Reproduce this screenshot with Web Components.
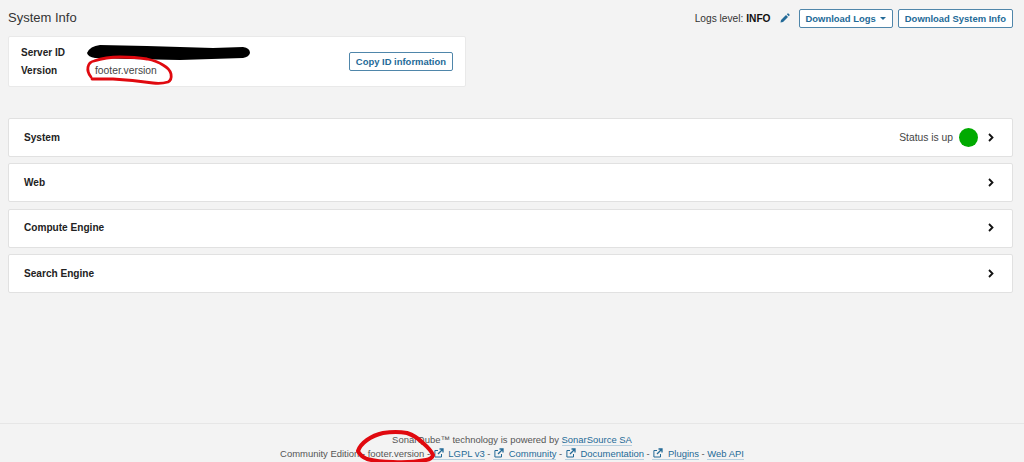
<!DOCTYPE html>
<html>
<head>
<meta charset="utf-8">
<title>System Info</title>
<style>
    html, body { margin: 0; height: 100%; }
    body {
        background: #f3f3f3;
        color: #333;
        font: 10.3px "Liberation Sans", Arial, sans-serif;
    }
</style>
</head>
<body>
<sys-page>
    <page-head></page-head>
    <id-card></id-card>
    <sys-panels>
        <sys-panel name="System" status="Status is up"></sys-panel>
        <sys-panel name="Web"></sys-panel>
        <sys-panel name="Compute Engine"></sys-panel>
        <sys-panel name="Search Engine"></sys-panel>
    </sys-panels>
    <page-footer slot="footer"></page-footer>
</sys-page>

<script>
const BUTTON_CSS = `
    .btn {
        display: inline-flex;
        align-items: center;
        gap: 4px;
        height: 19px;
        box-sizing: border-box;
        padding: 0 6px;
        border: 1px solid #4f86aa;
        border-radius: 2px;
        background: #fff;
        color: #236a97;
        font: bold 9.45px "Liberation Sans", Arial, sans-serif;
        white-space: nowrap;
    }
`;

class SysPage extends HTMLElement {
    constructor() {
        super();
        this.attachShadow({ mode: 'open' });
    }

    connectedCallback() {
        this.shadowRoot.innerHTML = `
            <style>
                :host {
                    display: flex;
                    flex-direction: column;
                    position: relative;
                    height: 462px;
                    overflow: hidden;
                }
                main {
                    flex: 1;
                    padding: 8px 11px 0 8px;
                }
                /* hand drawn marks sit on top of the page */
                svg {
                    position: absolute;
                    inset: 0;
                    pointer-events: none;
                }
            </style>
            <main><slot></slot></main>
            <slot name="footer"></slot>
            <svg width="1024" height="462" viewBox="0 0 1024 462" fill="none" stroke-linecap="round" stroke-linejoin="round">
                <path d="M87 53 Q90 46 100 45 L147 46 L213 48 L243 47 Q250 48 250 53 Q249 57 243 58 L180 60 L130 59 L95 58 Q88 57 87 53 Z" fill="#000"/>
                <path d="M91 77 Q87 72 88 67 Q89 62 94 61 Q106 57 120 57 Q135 57 147 59 Q157 61 163 65 Q170 69 171 74 Q172 80 168 82 Q161 84 153 83 Q132 80 113 79 Q100 79 92 79" stroke="#e0090f" stroke-width="2.8"/>
                <path d="M383 433 Q396 431 407 433 Q416 436 423 443 Q431 450 433 455 Q432 459 426 460 Q410 463 393 462 Q378 462 367 459 Q360 456 358 451 Q360 445 367 440 Q374 435 383 433" stroke="#e0090f" stroke-width="4"/>
            </svg>
        `;
    }
}

class PageHead extends HTMLElement {
    constructor() {
        super();
        this.attachShadow({ mode: 'open' });
    }

    connectedCallback() {
        this.shadowRoot.innerHTML = `
            <style>
                :host {
                    display: flex;
                    justify-content: space-between;
                    align-items: center;
                    height: 19px;
                    margin: 1px 0 8px;
                }
                h1 {
                    margin: -2px 0 0;
                    font: 13px "Liberation Sans", Arial, sans-serif;
                    color: #333;
                }
                .tools {
                    display: flex;
                    align-items: center;
                }
                .level { color: #333; font-size: 10.2px; }
                .level b { color: #111; }
                svg.pencil { margin: -1px 9px 0 9px; display: block; }
                .caret {
                    width: 0;
                    height: 0;
                    border: 3px solid transparent;
                    border-top: 3.5px solid #236a97;
                    border-bottom: 0;
                }
                .btn + .btn { margin-left: 5px; }
                ${BUTTON_CSS}
            </style>
            <h1>System Info</h1>
            <div class="tools">
                <span class="level">Logs level: <b>INFO</b></span>
                <svg class="pencil" width="10" height="10" viewBox="0 0 10 10">
                    <path d="M0.5 9.5 L1 7 L6 2 L8 4 L3 9 Z M6.8 1.2 L7.6 0.5 Q8 0.2 8.4 0.5 L9.5 1.6 Q9.8 2 9.5 2.4 L8.8 3.2 Z" fill="#236a97"/>
                </svg>
                <span class="btn">Download Logs <span class="caret"></span></span>
                <span class="btn">Download System Info</span>
            </div>
        `;
    }
}

class IdCard extends HTMLElement {
    constructor() {
        super();
        this.attachShadow({ mode: 'open' });
    }

    connectedCallback() {
        this.shadowRoot.innerHTML = `
            <style>
                :host {
                    display: flex;
                    justify-content: space-between;
                    align-items: center;
                    width: 458px;
                    height: 51px;
                    box-sizing: border-box;
                    padding: 0 12px 0 12px;
                    background: #fff;
                    border: 1px solid #e9e9e9;
                    border-radius: 2px;
                }
                dl {
                    display: grid;
                    grid-template-columns: 74px auto;
                    row-gap: 5px;
                    margin: 0;
                    line-height: 13px;
                }
                dt { font-weight: bold; font-size: 10px; color: #222; }
                dd { margin: 0; color: #444; }
                ${BUTTON_CSS}
            </style>
            <dl>
                <dt>Server ID</dt><dd>&nbsp;</dd>
                <dt>Version</dt><dd>footer.version</dd>
            </dl>
            <span class="btn">Copy ID information</span>
        `;
    }
}

class SysPanels extends HTMLElement {
    constructor() {
        super();
        this.attachShadow({ mode: 'open' });
    }

    connectedCallback() {
        this.shadowRoot.innerHTML = `
            <style>
                :host {
                    display: flex;
                    flex-direction: column;
                    gap: 6.3px;
                    margin-top: 31px;
                }
            </style>
            <slot></slot>
        `;
    }
}

class SysPanel extends HTMLElement {
    constructor() {
        super();
        this.attachShadow({ mode: 'open' });
    }

    connectedCallback() {
        const status = this.getAttribute('status');
        this.shadowRoot.innerHTML = `
            <style>
                :host {
                    display: flex;
                    align-items: center;
                    height: 39px;
                    box-sizing: border-box;
                    padding: 0 18px 0.5px 15px;
                    background: #fff;
                    border: 1px solid #e1e1e1;
                    border-radius: 2px;
                }
                .name {
                    flex: 1;
                    font-weight: bold;
                    font-size: 10.1px;
                    color: #222;
                }
                .status { color: #444; }
                .dot {
                    width: 19px;
                    height: 19px;
                    margin: 0 10px 0 6px;
                    border-radius: 50%;
                    background: #00aa00;
                }
                svg { display: block; }
            </style>
            <span class="name">${this.getAttribute('name')}</span>
            ${status ? `<span class="status">${status}</span><span class="dot"></span>` : ''}
            <svg width="6" height="9" viewBox="0 0 6 9">
                <path d="M1 1 L4.5 4.5 L1 8" fill="none" stroke="#111" stroke-width="1.8"/>
            </svg>
        `;
    }
}

class PageFooter extends HTMLElement {
    constructor() {
        super();
        this.attachShadow({ mode: 'open' });
    }

    _link(text) {
        return `<a><svg width="10" height="10" viewBox="0 0 10 10" fill="none" stroke="#236a97">
            <path d="M7.5 6 V9 H0.9 V2.5 H4"/><path d="M4 6 L8.5 1.5 M5.5 1 H9 V4.5" stroke-width="1.3"/>
        </svg> ${text}</a>`;
    }

    connectedCallback() {
        this.shadowRoot.innerHTML = `
            <style>
                :host {
                    display: block;
                    height: 39px;
                    box-sizing: border-box;
                    padding-top: 9px;
                    border-top: 1px solid #e6e6e6;
                    text-align: center;
                    font-size: 9.45px;
                    line-height: 14px;
                    color: #555;
                }
                a {
                    color: #236a97;
                    border-bottom: 1px solid #b8d0df;
                }
                svg { vertical-align: -1px; margin: 0 2px 0 1px; }
            </style>
            <div>SonarQube™ technology is powered by <a>SonarSource SA</a></div>
            <div>Community Edition - footer.version - ${this._link('LGPL v3')} - ${this._link('Community')} - ${this._link('Documentation')} - ${this._link('Plugins')} - <a>Web API</a></div>
        `;
    }
}

customElements.define('sys-page', SysPage);
customElements.define('page-head', PageHead);
customElements.define('id-card', IdCard);
customElements.define('sys-panels', SysPanels);
customElements.define('sys-panel', SysPanel);
customElements.define('page-footer', PageFooter);
</script>
</body>
</html>
